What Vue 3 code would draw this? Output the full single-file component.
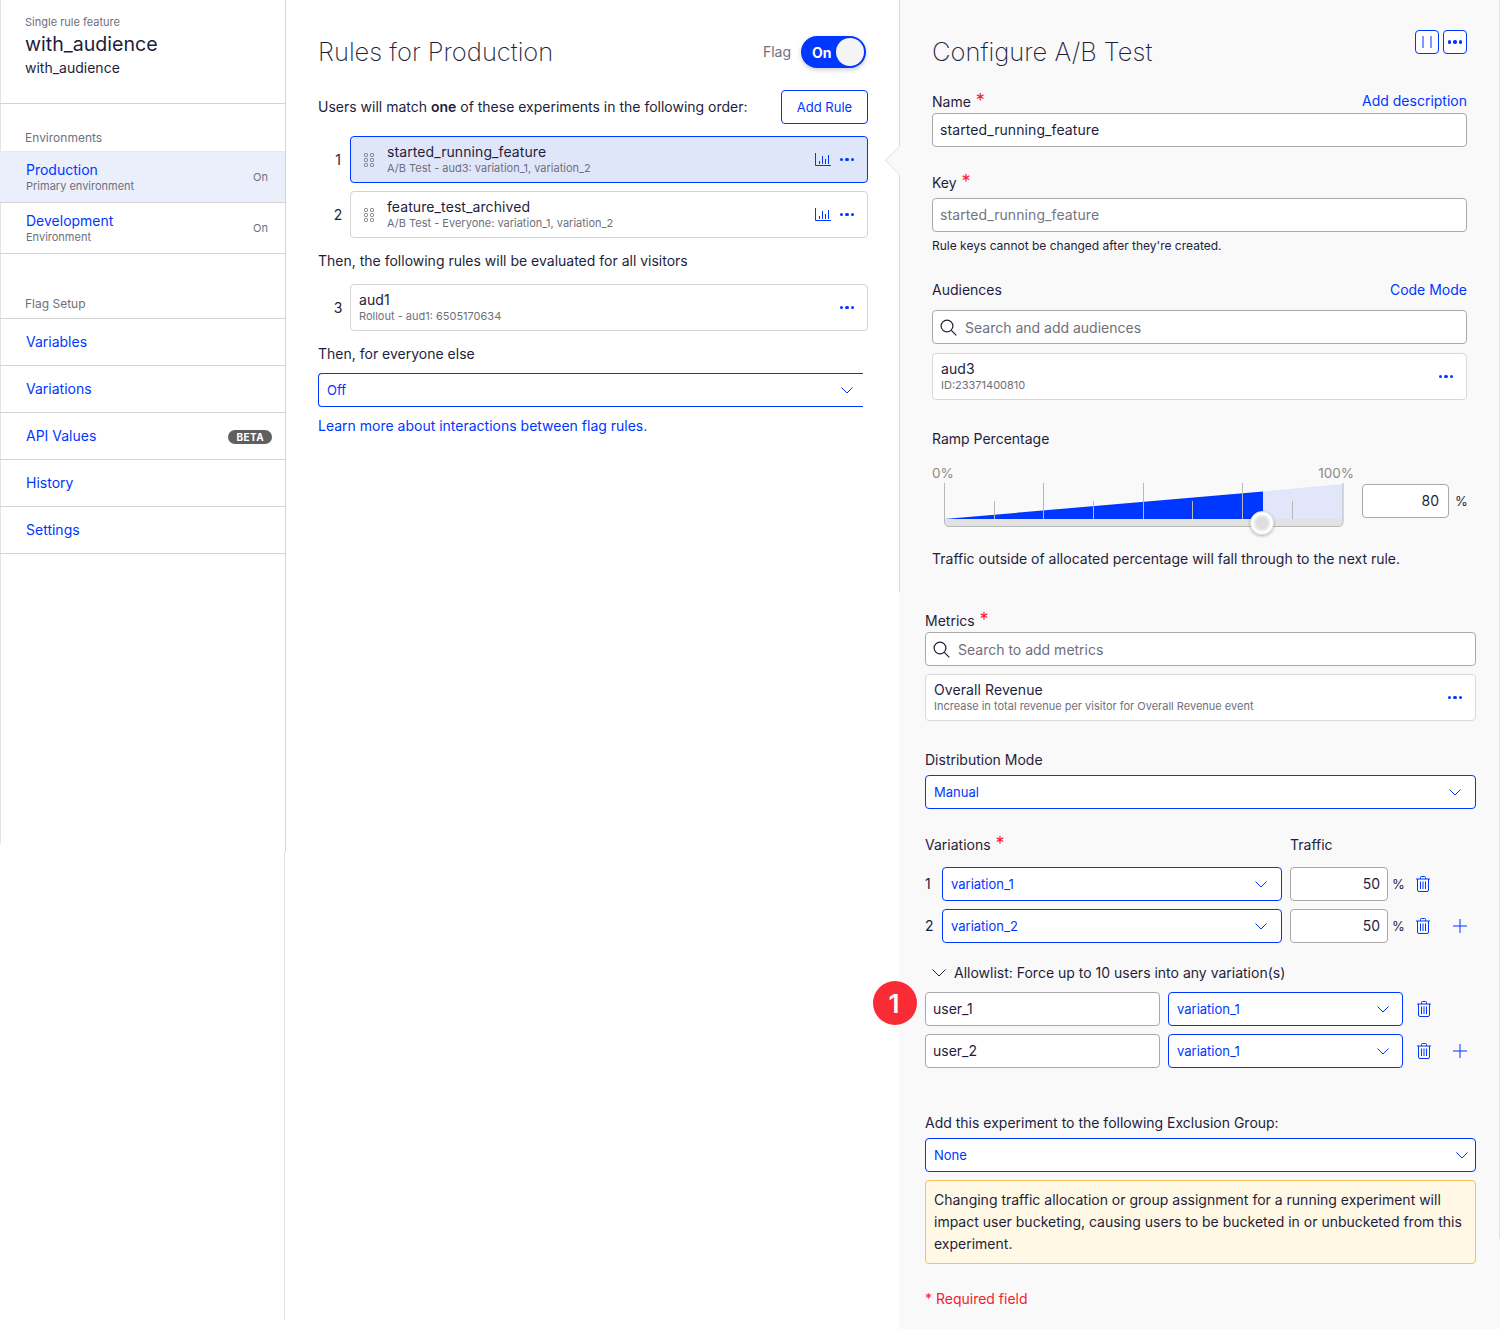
<script setup>
const navItems = ['Variables', 'Variations', 'API Values', 'History', 'Settings']
const envs = [
  { name: 'Production', sub: 'Primary environment', active: true },
  { name: 'Development', sub: 'Environment', active: false }
]
const rules = [
  { n: 1, name: 'started_running_feature', sub: 'A/B Test - aud3: variation_1, variation_2', active: true },
  { n: 2, name: 'feature_test_archived', sub: 'A/B Test - Everyone: variation_1, variation_2', active: false }
]
const longTicks = [99.5, 199.5, 298.5]
const shortTicks = [50.5, 149.5, 248.5, 348.5]
const gripCells = [
  [.5, .5], [6.5, .5],
  [.5, 5.5], [6.5, 5.5],
  [.5, 10.5], [6.5, 10.5]
]
</script>

<template>
  <div class="page">
    <aside class="side">
      <div class="side-upper">
        <header class="side-head">
          <div class="eyebrow">Single rule feature</div>
          <div class="flag-name">with_audience</div>
          <div class="flag-key">with_audience</div>
        </header>
        <div class="side-label env-label">Environments</div>
        <div v-for="e in envs" :key="e.name" class="env" :class="{ active: e.active }">
          <div>
            <div class="link env-name">{{ e.name }}</div>
            <div class="env-sub">{{ e.sub }}</div>
          </div>
          <span class="env-state">On</span>
        </div>
        <div class="side-label setup-label">Flag Setup</div>
        <nav class="nav">
          <div v-for="n in navItems" :key="n" class="nav-item">
            <span class="link">{{ n }}</span>
            <span v-if="n === 'API Values'" class="beta">BETA</span>
          </div>
        </nav>
      </div>
      <div class="side-lower"></div>
    </aside>

    <main class="main">
      <div class="main-head">
        <h1 class="title">Rules for Production</h1>
        <div class="flag-toggle">
          <span class="flag-word">Flag</span>
          <span class="toggle"><b>On</b><i></i></span>
        </div>
      </div>
      <div class="order-row">
        <span>Users will match <b class="semi">one</b> of these experiments in the following order:</span>
        <button class="add-rule">Add Rule</button>
      </div>
      <div v-for="r in rules" :key="r.n" class="rule-row">
        <span class="rule-n">{{ r.n }}</span>
        <div class="rule" :class="{ active: r.active }">
          <svg class="grip" width="10" height="14" viewBox="0 0 10 14" fill="none" stroke="#707070" stroke-width="1">
            <rect v-for="(c, i) in gripCells" :key="i" :x="c[0]" :y="c[1]" width="3" height="3" rx="1" />
          </svg>
          <div class="rule-text">
            <div class="rule-name">{{ r.name }}</div>
            <div class="rule-sub">{{ r.sub }}</div>
          </div>
          <svg class="bars" width="16" height="13" viewBox="0 0 16 13" fill="none" stroke="#0037ff" stroke-width="1">
            <path d="M.5 0v12.500H16M4.500 8v3M7.500 3v8M10.500 6v5M13.500 2v9" />
          </svg>
          <span class="dots"><i></i><i></i><i></i></span>
        </div>
      </div>
      <p class="then then-a">Then, the following rules will be evaluated for all visitors</p>
      <div class="rule-row">
        <span class="rule-n">3</span>
        <div class="rule plain">
          <div class="rule-text">
            <div class="rule-name">aud1</div>
            <div class="rule-sub">Rollout - aud1: 6505170634</div>
          </div>
          <span class="dots"><i></i><i></i><i></i></span>
        </div>
      </div>
      <p class="then then-b">Then, for everyone else</p>
      <div class="off-select">
        <span>Off</span>
        <svg class="chev" width="12" height="7" viewBox="0 0 12 7" fill="none" stroke="#0037ff"><path d="M.5.5 6 6l5.500-5.500" /></svg>
      </div>
      <p class="learn link">Learn more about interactions between flag rules.</p>
    </main>

    <section class="panel">
      <div class="panel-top">
        <span class="notch"></span>
        <div class="panel-head">
          <h2 class="title">Configure A/B Test</h2>
          <div class="head-btns">
            <span class="square"><svg width="10" height="12" viewBox="0 0 10 12" fill="none" stroke="#0037ff"><path d="M1 0v12M9 0v12" /></svg></span>
            <span class="square"><span class="dots"><i></i><i></i><i></i></span></span>
          </div>
        </div>
        <div class="label-row name-label">
          <span>Name <em class="req">*</em></span>
          <span class="link">Add description</span>
        </div>
        <div class="field und">started_running_feature</div>
        <div class="label-row key-label"><span>Key <em class="req">*</em></span></div>
        <div class="field disabled und">started_running_feature</div>
        <p class="help">Rule keys cannot be changed after they're created.</p>
        <div class="label-row aud-label">
          <span>Audiences</span>
          <span class="link">Code Mode</span>
        </div>
        <div class="field search">
          <svg width="17" height="17" viewBox="0 0 17 17" fill="none" stroke="#1e1e3c" stroke-width="1.2"><circle cx="7" cy="7" r="5.900" /><path d="m11.300 11.300 5 5" /></svg>
          <span>Search and add audiences</span>
        </div>
        <div class="card">
          <div class="card-text">
            <div class="rule-name">aud3</div>
            <div class="rule-sub">ID:23371400810</div>
          </div>
          <span class="dots"><i></i><i></i><i></i></span>
        </div>
        <div class="ramp-label">Ramp Percentage</div>
        <div class="ramp">
          <div class="ramp-chart">
            <div class="scale"><span>0%</span><span>100%</span></div>
            <div class="slider">
              <svg width="400" height="44" viewBox="0 0 400 44" fill="none">
                <path d="M.5 36h398v3a5 5 0 0 1-5 5H5.500a5 5 0 0 1-5-5z" fill="#e2e2e2" />
                <path d="M319 36V8.400L399 1V36z" fill="#e2e6fb" />
                <path d="M.5 36 319 8.400V36z" fill="#0037ff" />
                <path d="M.5 0V39M399 0V39" stroke="#b8b8b8" />
                <path v-for="t in longTicks" :key="t" :d="`M${t} 0V36`" stroke="#b8b8b8" />
                <path v-for="t in shortTicks" :key="t" :d="`M${t} 18V36`" stroke="#b8b8b8" />
                <path d="M.5 39a4.500 4.500 0 0 0 4.500 4.500H394.500a4.500 4.500 0 0 0 4.500-4.500" stroke="#b8b8b8" />
              </svg>
              <span class="thumb"></span>
            </div>
          </div>
          <div class="pct-wrap">
            <span class="field pct">80</span>
            <span class="pct-sign">%</span>
          </div>
        </div>
        <p class="fall">Traffic outside of allocated percentage will fall through to the next rule.</p>
      </div>

      <div class="panel-bottom">
        <div class="metrics-label"><span>Metrics <em class="req">*</em></span></div>
        <div class="field search">
          <svg width="17" height="17" viewBox="0 0 17 17" fill="none" stroke="#1e1e3c" stroke-width="1.2"><circle cx="7" cy="7" r="5.900" /><path d="m11.300 11.300 5 5" /></svg>
          <span>Search to add metrics</span>
        </div>
        <div class="card">
          <div class="card-text">
            <div class="rule-name">Overall Revenue</div>
            <div class="rule-sub">Increase in total revenue per visitor for Overall Revenue event</div>
          </div>
          <span class="dots"><i></i><i></i><i></i></span>
        </div>
        <div class="dist-label">Distribution Mode</div>
        <div class="bselect">
          <span>Manual</span>
          <svg width="12" height="7" viewBox="0 0 12 7" fill="none" stroke="#0037ff"><path d="M.5.5 6 6l5.500-5.500" /></svg>
        </div>
        <div class="var-head">
          <span>Variations <em class="req">*</em></span>
          <span class="traffic">Traffic</span>
        </div>
        <div v-for="v in 2" :key="v" class="var-row">
          <span class="var-n">{{ v }}</span>
          <div class="bselect var-select">
            <span>variation_{{ v }}</span>
            <svg width="12" height="7" viewBox="0 0 12 7" fill="none" stroke="#0037ff"><path d="M.5.5 6 6l5.500-5.500" /></svg>
          </div>
          <span class="field traffic-input">50</span>
          <span class="pct-sign">%</span>
          <svg class="trash" width="14" height="16" viewBox="0 0 14 16" fill="none" stroke="#0037ff">
            <path d="M0 3h14M4.500 3V1.500q0-1 1-1h3q1 0 1 1V3M1.500 3v11q0 1.500 1.500 1.500h8q1.500 0 1.500-1.500V3M4.500 5.500v7.500M7 5.500v7.500M9.500 5.500v7.500" />
          </svg>
          <svg v-if="v === 2" class="plus" width="14" height="14" viewBox="0 0 14 14" fill="none" stroke="#0037ff"><path d="M7 0v14M0 7h14" /></svg>
        </div>
        <div class="allow-head">
          <svg width="14" height="8" viewBox="0 0 14 8" fill="none" stroke="#1e1e3c"><path d="m.5.500 6.500 6.500 6.500-6.500" /></svg>
          <span>Allowlist: Force up to 10 users into any variation(s)</span>
        </div>
        <div v-for="u in 2" :key="u" class="allow-row">
          <span class="field user">user_{{ u }}</span>
          <div class="bselect allow-select">
            <span>variation_1</span>
            <svg width="12" height="7" viewBox="0 0 12 7" fill="none" stroke="#0037ff"><path d="M.5.5 6 6l5.500-5.500" /></svg>
          </div>
          <svg class="trash allow-trash" width="14" height="16" viewBox="0 0 14 16" fill="none" stroke="#0037ff">
            <path d="M0 3h14M4.500 3V1.500q0-1 1-1h3q1 0 1 1V3M1.500 3v11q0 1.500 1.500 1.500h8q1.500 0 1.500-1.500V3M4.500 5.500v7.500M7 5.500v7.500M9.500 5.500v7.500" />
          </svg>
          <svg v-if="u === 2" class="plus allow-plus" width="14" height="14" viewBox="0 0 14 14" fill="none" stroke="#0037ff"><path d="M7 0v14M0 7h14" /></svg>
          <span v-if="u === 1" class="badge">1</span>
        </div>
        <div class="excl-label">Add this experiment to the following Exclusion Group:</div>
        <div class="bselect excl-select">
          <span>None</span>
          <svg width="12" height="7" viewBox="0 0 12 7" fill="none" stroke="#0037ff"><path d="M.5.5 6 6l5.500-5.500" /></svg>
        </div>
        <div class="warn">Changing traffic allocation or group assignment for a running experiment will impact user bucketing, causing users to be bucketed in or unbucketed from this experiment.</div>
        <p class="required">* Required field</p>
      </div>
    </section>
  </div>
</template>

<style scoped>
.page { display: flex; width: 1500px; height: 1329px; overflow: hidden; background: #fff; color: #1e1e3c; font: 14px/20px Inter, "Liberation Sans", sans-serif; }
p, h1, h2 { margin: 0; font-weight: 400; }
em { font-style: normal; }
.link { color: #0037ff; }
.semi { font-weight: 600; }
.title { font-size: 25.5px; line-height: 32px; font-weight: 200; }

.side { width: 286px; flex: none; display: flex; flex-direction: column; }
.side-upper { height: 852px; border-right: 1px solid #d4d4d4; box-sizing: border-box; background: linear-gradient(#e4e4e4, #e4e4e4) 0 0 / 1px 844px no-repeat; }
.side-lower { width: 285px; height: 468px; border-right: 1px solid #e2e2e2; box-sizing: border-box; }
.side-head { height: 104px; box-sizing: border-box; padding: 15px 25px 0; border-bottom: 1px solid #d4d4d4; }
.eyebrow { font-size: 11px; line-height: 14px; color: #6f6f7b; }
.flag-name { font-size: 19.6px; line-height: 30px; }
.flag-key { font-size: 14px; line-height: 18px; }
.side-label { font-size: 12px; line-height: 16px; color: #6f6f7b; padding-left: 25px; }
.env-label { margin-top: 26px; padding-bottom: 5px; }
.env { height: 51px; box-sizing: border-box; padding: 9px 17px 0 26px; display: flex; justify-content: space-between; border-bottom: 1px solid #d4d4d4; }
.env.active { background: #ebeffb; border-top: 1px solid #e4e8f4; height: 52px; }
.env-name { line-height: 18px; }
.env-sub { font-size: 11px; line-height: 14px; color: #6f6f7b; }
.env-state { font-size: 11px; color: #6f6f7b; align-self: center; margin-bottom: 10px; }
.setup-label { margin-top: 42px; padding-bottom: 6px; border-bottom: 1px solid #d4d4d4; }
.nav-item { height: 47px; box-sizing: border-box; border-bottom: 1px solid #d4d4d4; padding: 0 13px 0 26px; display: flex; align-items: center; justify-content: space-between; }
.beta { background: #5f5f5f; color: #fff; font-size: 10px; font-weight: 700; line-height: 14px; padding: 0 8px; border-radius: 7px; letter-spacing: .4px; margin-top: 1px; }

.main { width: 613px; flex: none; box-sizing: border-box; padding: 0 31px 0 32px; }
.main-head { height: 104px; padding-top: 36px; box-sizing: border-box; display: flex; justify-content: space-between; align-items: flex-start; }
.flag-toggle { display: flex; align-items: center; gap: 10px; margin-right: 2px; }
.flag-word { color: #6f6f7b; }
.toggle { position: relative; width: 65px; height: 32px; background: #0037ff; border-radius: 16px; box-shadow: 0 2px 5px rgba(0, 0, 0, .2); display: block; }
.toggle b { position: absolute; left: 11px; top: 7px; color: #fff; font-size: 14px; font-weight: 700; }
.toggle i { position: absolute; right: 2px; top: 2px; width: 28px; height: 28px; background: #f4f4f4; border-radius: 50%; }
.order-row { display: flex; justify-content: space-between; align-items: center; height: 34px; margin: -14px 0 12px; }
.add-rule { width: 87px; height: 34px; background: #fff; border: 1px solid #0037ff; border-radius: 4px; color: #0037ff; font: inherit; font-size: 13px; padding: 0; }
.rule-row { display: flex; align-items: center; height: 47px; margin-bottom: 8px; }
.rule-n { width: 32px; flex: none; text-align: center; padding: 1px 0 0 8px; box-sizing: border-box; }
.rule { flex: 1; height: 47px; box-sizing: border-box; display: flex; align-items: center; border: 1px solid #d4d4d4; border-radius: 4px; padding: 0 13px; background: #fff; }
.rule.active { background: #e0e6fa; border-color: #0037ff; }
.rule.plain { padding-left: 8px; }
.grip { flex: none; margin-right: 13px; }
.rule-text { flex: 1; min-width: 0; margin-bottom: 2px; }
.card-text { margin-bottom: 2px; }
.rule-name { line-height: 18px; letter-spacing: .09px; }
.und { letter-spacing: .09px; }
.rule-sub { font-size: 11px; line-height: 14px; color: #6f6f7b; }
.bars { margin-right: 9px; }
.dots { display: inline-flex; gap: 2px; align-items: center; }
.dots i { width: 3.500px; height: 3.500px; border-radius: 50%; background: #0037ff; display: block; }
.then-a { margin-top: 13px; margin-bottom: 13px; }
.then-b { margin-top: 13px; margin-bottom: 9px; }
.off-select { height: 34px; box-sizing: border-box; width: 545px; border: 1px solid #0037ff; border-right: 0; border-radius: 4px 0 0 4px; padding: 0 10px 0 8px; display: flex; align-items: center; justify-content: space-between; color: #0037ff; font-size: 13px; background: #fff; }
.learn { margin-top: 9px; }

.panel { width: 601px; flex: none; background: linear-gradient(#e4e4e4, #e4e4e4) 100% 0 / 1px 1238px no-repeat, #f9f9f9; position: relative; }
.panel-top { height: 592px; box-sizing: border-box; padding: 0 33px 0 32px; border-left: 1px solid #d8d8d8; position: relative; }
.notch { position: absolute; left: -11.5px; top: 149.5px; width: 21px; height: 21px; box-sizing: border-box; background: #f9f9f9; border-left: 1px solid #e6e6e6; border-bottom: 1px solid #e6e6e6; transform: rotate(45deg); }
.panel-head { height: 80px; padding-top: 36px; box-sizing: border-box; display: flex; justify-content: space-between; align-items: flex-start; }
.head-btns { display: flex; gap: 4px; margin-top: -6px; }
.square { width: 24px; height: 24px; box-sizing: border-box; border: 1px solid #0037ff; border-radius: 4px; display: flex; align-items: center; justify-content: center; background: #fff; }
.label-row { display: flex; justify-content: space-between; line-height: 20px; }
.req { color: #f5212d; font-size: 18px; line-height: 14px; margin-left: 1px; }
.name-label { margin-top: 12px; margin-bottom: 1px; }
.name-label .link { margin-top: -1px; }
.key-label { margin-top: 26px; margin-bottom: 5px; }
.aud-label { margin-top: 26px; margin-bottom: 10px; }
.field { height: 34px; box-sizing: border-box; border: 1px solid #a9a9a9; border-radius: 4px; background: #fff; display: flex; align-items: center; padding: 0 7px; }
.field.disabled { color: #75757f; }
.help { font-size: 12px; line-height: 16px; margin-top: 6px; }
.search { gap: 8px; color: #6f6f7b; }
.search svg { flex: none; }
.search span { margin-top: 2px; }
.card { height: 47px; margin-top: 9px; box-sizing: border-box; border: 1px solid #d9d9d9; border-radius: 4px; background: #fff; display: flex; align-items: center; justify-content: space-between; padding: 0 13px 0 8px; }
.panel-bottom .card { margin-top: 8px; }
.ramp-label { margin-top: 29px; }
.ramp { display: flex; margin-top: 14px; align-items: flex-start; }
.ramp-chart { width: 430px; flex: none; }
.scale { width: 422px; display: flex; justify-content: space-between; color: #8a8a8a; line-height: 20px; font-size: 13.5px; }
.slider { position: relative; width: 400px; height: 44px; margin-left: 12px; }
.slider svg { display: block; }
.thumb { position: absolute; left: 306px; top: 28px; width: 24px; height: 24px; box-sizing: border-box; border-radius: 50%; background: radial-gradient(circle, #ddd 0 5px, #f0f0f0 8px, #fff 9px); border: 1px solid #ddd; box-shadow: 0 1px 3px rgba(0, 0, 0, .3); }
.pct-wrap { display: flex; align-items: center; margin-top: 21px; }
.pct { width: 87px; justify-content: flex-end; padding-right: 9px; }
.pct-sign { margin-left: 6px; font-size: 13px; }
.fall { margin-top: 22px; }

.panel-bottom { padding: 19px 24px 0 26px; }
.metrics-label { margin-bottom: 1px; }
.dist-label { margin-top: 29px; margin-bottom: 5px; }
.bselect { height: 34px; box-sizing: border-box; border: 1px solid #0037ff; border-radius: 4px; background: #fff; color: #0037ff; font-size: 13px; display: flex; align-items: center; justify-content: space-between; padding: 0 14px 0 8px; }
.excl-select { padding-right: 7px; }
.var-head { display: flex; margin-top: 26px; margin-bottom: 12px; }
.var-head > span:first-child { width: 365px; }
.var-row { display: flex; align-items: center; height: 34px; margin-bottom: 8px; }
.var-n { width: 17px; flex: none; }
.var-select { width: 340px; flex: none; margin-right: 8px; padding-right: 14px; }
.traffic-input { width: 98px; flex: none; justify-content: flex-end; }
.var-row .pct-sign { margin-left: 4px; }
.trash { flex: none; margin-left: 11px; }
.plus { flex: none; margin-left: 23px; }
.allow-head { display: flex; align-items: center; gap: 8px; margin-top: 20px; margin-bottom: 9px; padding-left: 7px; }
.allow-row { display: flex; align-items: center; height: 34px; margin-bottom: 8px; position: relative; }
.user { width: 235px; flex: none; margin-right: 8px; }
.allow-select { width: 235px; flex: none; padding-right: 13px; }
.allow-trash { margin-left: 14px; }
.allow-plus { margin-left: 22px; }
.badge { position: absolute; left: -52px; top: -11px; width: 44px; height: 44px; box-sizing: border-box; padding: 1px 2px 0 0; border-radius: 50%; background: #f92b35; color: #fff; display: flex; align-items: center; justify-content: center; font-size: 26px; font-weight: 600; line-height: 1; }
.excl-label { margin-top: 45px; margin-bottom: 5px; }
.warn { margin-top: 8px; height: 84px; box-sizing: border-box; background: #fff8e5; border: 1px solid #f2c35f; border-radius: 4px; padding: 8px 8px; line-height: 22px; }
.required { color: #f5212d; margin-top: 25px; }
</style>
